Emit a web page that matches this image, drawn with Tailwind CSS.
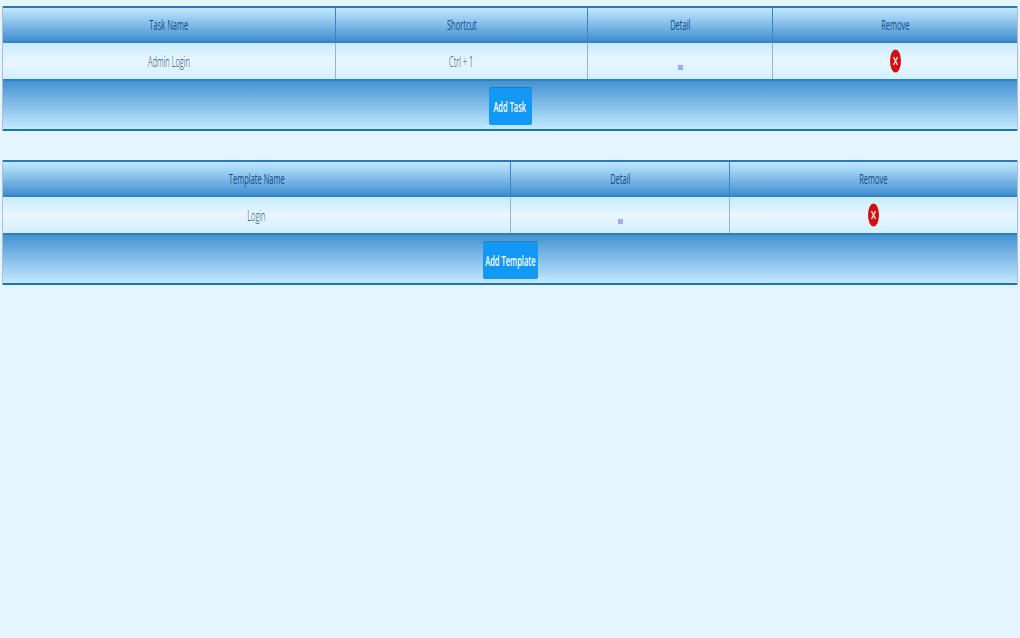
<html lang="en">
 <head>
  <meta charset="utf-8"/>
  <title>Task List</title>
  <script src="https://cdn.jsdelivr.net/npm/@tailwindcss/browser@4"></script>
 </head>
 <body class="bg-[#e5f5ff] h-[638px] overflow-hidden font-['Open_Sans',sans-serif]">
  <div class="px-[2px] pt-[6px] flex flex-col gap-[29px]">

   <!-- tasks -->
   <div class="border-l border-r border-[#aebfcc]">
    <div class="grid grid-cols-[333px_252px_185px_1fr] h-[37px] border-t-2 border-b-2 border-t-[#2a79b9] border-b-[#3583c2] bg-gradient-to-b from-[#c2e9ff] to-[#3f8fd0] text-[#0f4c86] text-[15px]">
     <div class="flex items-center justify-center border-r border-[#3a86c0]"><span class="scale-x-[.5] whitespace-nowrap">Task Name</span></div>
     <div class="flex items-center justify-center border-r border-[#3a86c0]"><span class="scale-x-[.5] whitespace-nowrap">Shortcut</span></div>
     <div class="flex items-center justify-center border-r border-[#3a86c0]"><span class="scale-x-[.5] whitespace-nowrap">Detail</span></div>
     <div class="flex items-center justify-center"><span class="scale-x-[.5] whitespace-nowrap">Remove</span></div>
    </div>
    <div class="grid grid-cols-[333px_252px_185px_1fr] h-[36px] bg-gradient-to-b from-[#c6ebff] via-[#e8f6ff] to-[#d3effe] text-[#143f73] text-[15px] font-light">
     <div class="flex items-center justify-center border-r border-[#9db1bf]"><span class="scale-x-[.5] whitespace-nowrap">Admin Login</span></div>
     <div class="flex items-center justify-center border-r border-[#9db1bf]"><span class="scale-x-[.5] whitespace-nowrap">Ctrl + 1</span></div>
     <div class="flex items-end justify-center pb-[9px] border-r border-[#9db1bf]"><span class="w-[5px] h-[5px] bg-[#a9a9ee]"></span></div>
     <div class="flex items-center justify-center">
      <svg width="11" height="24" viewBox="0 0 11 24"><ellipse cx="5.5" cy="12" rx="5.5" ry="11.5" fill="#d40f0f"/><path d="M3.5 8 7.5 16M7.5 8 3.5 16" stroke="#fbe3e3" stroke-width="1.4"/></svg>
     </div>
    </div>
    <div class="h-[52px] flex items-center justify-center pt-[2px] border-t-2 border-b-2 border-t-[#3080c0] border-b-[#1f72b4] bg-gradient-to-b from-[#4393d3] to-[#c2e9ff]">
     <button class="w-[43px] h-[37px] rounded-[2px] bg-[#1298f5] text-white text-[15px] font-semibold flex items-center justify-center shadow-[0_-1px_0_#2a79b9]"><span class="scale-x-[.5] whitespace-nowrap">Add Task</span></button>
    </div>
   </div>

   <!-- templates -->
   <div class="border-l border-r border-[#aebfcc]">
    <div class="grid grid-cols-[508px_219px_1fr] h-[37px] border-t-2 border-b-2 border-t-[#2a79b9] border-b-[#3583c2] bg-gradient-to-b from-[#c2e9ff] to-[#3f8fd0] text-[#0f4c86] text-[15px]">
     <div class="flex items-center justify-center border-r border-[#3a86c0]"><span class="scale-x-[.5] whitespace-nowrap">Template Name</span></div>
     <div class="flex items-center justify-center border-r border-[#3a86c0]"><span class="scale-x-[.5] whitespace-nowrap">Detail</span></div>
     <div class="flex items-center justify-center"><span class="scale-x-[.5] whitespace-nowrap">Remove</span></div>
    </div>
    <div class="grid grid-cols-[508px_219px_1fr] h-[36px] bg-gradient-to-b from-[#c6ebff] via-[#e8f6ff] to-[#d3effe] text-[#143f73] text-[15px] font-light">
     <div class="flex items-center justify-center border-r border-[#9db1bf]"><span class="scale-x-[.5] whitespace-nowrap">Login</span></div>
     <div class="flex items-end justify-center pb-[9px] border-r border-[#9db1bf]"><span class="w-[5px] h-[5px] bg-[#a9a9ee]"></span></div>
     <div class="flex items-center justify-center">
      <svg width="11" height="24" viewBox="0 0 11 24"><ellipse cx="5.5" cy="12" rx="5.5" ry="11.5" fill="#d40f0f"/><path d="M3.5 8 7.5 16M7.5 8 3.5 16" stroke="#fbe3e3" stroke-width="1.4"/></svg>
     </div>
    </div>
    <div class="h-[52px] flex items-center justify-center pt-[2px] border-t-2 border-b-2 border-t-[#3080c0] border-b-[#1f72b4] bg-gradient-to-b from-[#4393d3] to-[#c2e9ff]">
     <button class="w-[55px] h-[37px] rounded-[2px] bg-[#1298f5] text-white text-[15px] font-semibold flex items-center justify-center shadow-[0_-1px_0_#2a79b9]"><span class="scale-x-[.5] whitespace-nowrap">Add Template</span></button>
    </div>
   </div>

  </div>
 </body>
</html>
